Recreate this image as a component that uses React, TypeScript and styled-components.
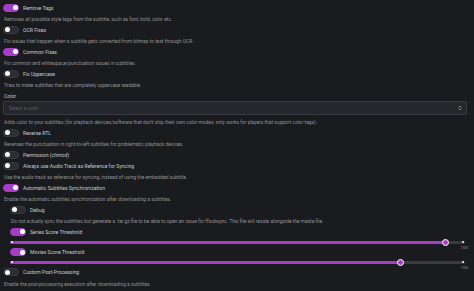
import React from "react";
import styled, { createGlobalStyle } from "styled-components";

const Global = createGlobalStyle`
  html, body { margin: 0; padding: 0; background: #1a1b1e; }
  body { font-family: Roboto, "Noto Sans", "Liberation Sans", sans-serif; }
`;

const Page = styled.div`
  width: 474px;
  height: 291px;
  overflow: hidden;
  box-sizing: border-box;
  padding: 2px 7px 0 3px;
  display: flex;
  flex-direction: column;
  background: #1a1b1e;
`;

const Indented = styled.div`
  display: flex;
  flex-direction: column;
  padding-left: 7px;
`;

const Row = styled.div<{ $h?: number }>`
  height: ${(p) => p.$h ?? 11}px;
  display: flex;
  align-items: center;
  gap: 4px;
`;

const Track = styled.span<{ $on: boolean }>`
  position: relative;
  width: 16px;
  height: 8px;
  border-radius: 4px;
  box-sizing: border-box;
  background: ${(p) => (p.$on ? "#a53ec4" : "#2c2e33")};
  border: 1px solid ${(p) => (p.$on ? "#a53ec4" : "#373a40")};
  flex: none;
`;

const Thumb = styled.span<{ $on: boolean }>`
  position: absolute;
  top: 0.5px;
  left: ${(p) => (p.$on ? "8.5px" : "0.5px")};
  width: 5px;
  height: 5px;
  border-radius: 50%;
  background: #ffffff;
`;

const Label = styled.span`
  font-size: 5.1px;
  color: #c9cacd;
  white-space: nowrap;
`;

const Desc = styled.div<{ $mt?: number }>`
  height: 11px;
  margin-top: ${(p) => p.$mt ?? 0}px;
  display: flex;
  align-items: center;
  padding-left: 1px;
  font-size: 4.9px;
  color: #909296;
  white-space: nowrap;
`;

const FieldLabel = styled.div`
  height: 11px;
  display: flex;
  align-items: center;
  padding-left: 1px;
  font-size: 5.1px;
  color: #c9cacd;
`;

const SelectBox = styled.div`
  height: 14px;
  box-sizing: border-box;
  border: 1px solid #373a40;
  background: #25262b;
  border-radius: 2px;
  display: flex;
  align-items: center;
  justify-content: space-between;
  padding: 0 4px 0 5px;
  font-size: 4.9px;
  color: #5c5f66;
`;

const SliderRow = styled.div`
  position: relative;
  height: 10px;
  display: flex;
  align-items: center;
`;

const Rail = styled.div`
  position: relative;
  flex: 1;
  height: 3px;
  margin-right: 2px;
  border-radius: 2px;
  background: #373a40;
`;

const Fill = styled.div`
  position: absolute;
  left: 0;
  top: 0;
  bottom: 0;
  border-radius: 2px;
  background: #a53ec4;
`;

const Mark = styled.span<{ $at: "start" | "end" }>`
  position: absolute;
  top: 0.5px;
  ${(p) => (p.$at === "start" ? "left: 1px;" : "right: 1px;")}
  width: 2px;
  height: 2px;
  border-radius: 50%;
  background: #ffffff;
`;

const MarkLabel = styled.span`
  position: absolute;
  right: -3px;
  top: 4px;
  font-size: 4.4px;
  color: #909296;
`;

const Knob = styled.span`
  position: absolute;
  top: 50%;
  width: 7px;
  height: 7px;
  margin-left: -3.5px;
  margin-top: -3.5px;
  box-sizing: border-box;
  border-radius: 50%;
  background: #a53ec4;
  border: 1.6px solid #ffffff;
`;

const Chevrons = () => (
  <svg width="4" height="6" viewBox="0 0 8 12" fill="none" stroke="#909296" strokeWidth="1.6" strokeLinecap="round" strokeLinejoin="round">
    <path d="M1.5 4.5 L4 2 L6.5 4.5" />
    <path d="M1.5 7.5 L4 10 L6.5 7.5" />
  </svg>
);

const Switch = ({ on, label, h }: { on: boolean; label: string; h?: number }) => (
  <Row $h={h}>
    <Track $on={on}>
      <Thumb $on={on} />
    </Track>
    <Label>{label}</Label>
  </Row>
);

const Slider = ({ value }: { value: number }) => (
  <SliderRow>
    <Rail>
      <Fill style={{ width: `${value}%` }} />
      <Mark $at="start" />
      <Mark $at="end" />
      <MarkLabel>100</MarkLabel>
      <Knob style={{ left: `${value}%` }} />
    </Rail>
  </SliderRow>
);

export default function App() {
  return (
    <>
      <Global />
      <Page>
        <Switch on label="Remove Tags" />
        <Desc>Removes all possible style tags from the subtitle, such as font, bold, color etc.</Desc>
        <Switch on={false} label="OCR Fixes" />
        <Desc>Fix issues that happen when a subtitle gets converted from bitmap to text through OCR.</Desc>
        <Switch on label="Common Fixes" />
        <Desc>Fix common and whitespace/punctuation issues in subtitles.</Desc>
        <Switch on={false} label="Fix Uppercase" />
        <Desc>Tries to make subtitles that are completely uppercase readable.</Desc>
        <FieldLabel>Color</FieldLabel>
        <SelectBox>
          <span>Select a color</span>
          <Chevrons />
        </SelectBox>
        <Desc $mt={1}>
          Adds color to your subtitles (for playback devices/software that don't ship their own color modes; only works for players that support color tags).
        </Desc>
        <Switch on={false} label="Reverse RTL" />
        <Desc>Reverses the punctuation in right-to-left subtitles for problematic playback devices.</Desc>
        <Switch on={false} label="Permission (chmod)" />
        <Switch on={false} label="Always use Audio Track as Reference for Syncing" />
        <Desc>Use the audio track as reference for syncing, instead of using the embedded subtitle.</Desc>
        <Switch on label="Automatic Subtitles Synchronization" />
        <Desc>Enable the automatic subtitles synchronization after downloading a subtitles.</Desc>
        <Indented>
          <Switch on={false} label="Debug" />
          <Desc>
            Do not actually sync the subtitles but generate a .tar.gz file to be able to open an issue for ffsubsync. This file will reside alongside the media file.
          </Desc>
          <Switch on label="Series Score Threshold" />
          <Slider value={95.8} />
          <Switch on label="Movies Score Threshold" h={10} />
          <Slider value={85.8} />
        </Indented>
        <Switch on={false} label="Custom Post-Processing" h={10} />
        <Desc $mt={1}>Enable the post-processing execution after downloading a subtitles.</Desc>
      </Page>
    </>
  );
}
